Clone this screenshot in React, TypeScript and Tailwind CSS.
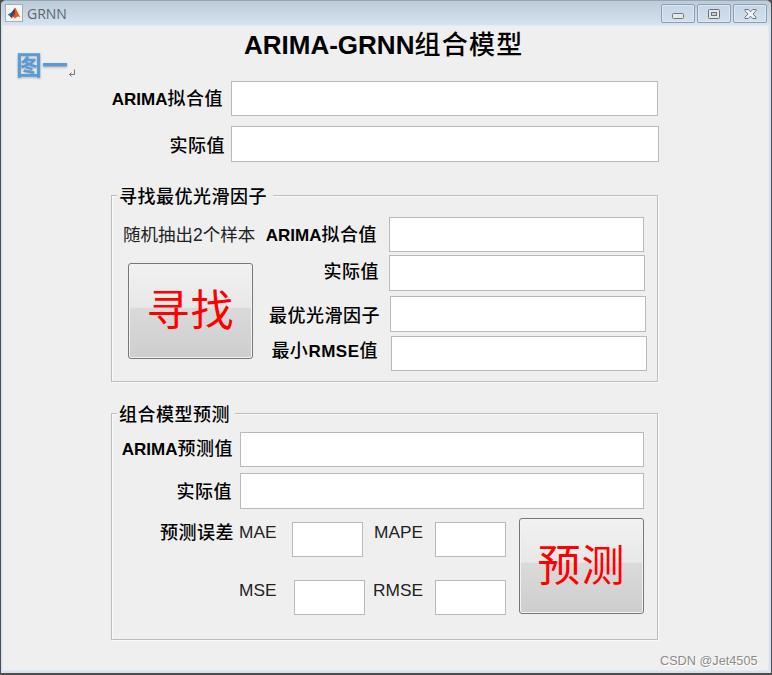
import { ReactNode } from 'react'
import { clsx } from 'clsx'

const latin = "font-['Liberation_Sans','Noto_Sans_CJK_SC',sans-serif]"

// Splits mixed labels so that the CJK part can be set a little larger than the latin part
function Mixed({ text, large }: { text: string; large?: boolean }) {
    const parts = text.split(/([\u4e00-\u9fff]+)/).filter(Boolean)
    return (
        <>
            {parts.map((part, i) => {
                const cjk = /[\u4e00-\u9fff]/.test(part)
                return (
                    <span
                        key={i}
                        className={clsx(
                            cjk && 'font-medium',
                            cjk && (large ? 'text-[26px] tracking-[1.3px]' : 'text-[18px] tracking-[0.5px]')
                        )}
                    >
                        {part}
                    </span>
                )
            })}
        </>
    )
}

function Label({ text, className }: { text: string; className?: string }) {
    return (
        <label className={clsx('shrink-0 text-right font-bold text-[17px] leading-[20px] whitespace-nowrap text-black', className)}>
            <Mixed text={text} />
        </label>
    )
}

function Field({ className }: { className?: string }) {
    return <input className={clsx('block shrink-0 border border-[#b8b8be] bg-white outline-none', className)} />
}

function PushButton({ children }: { children: ReactNode }) {
    return (
        <button className="block h-[96px] w-[125px] shrink-0 rounded-[3px] border border-[#777777] bg-[linear-gradient(#f1f1f1_0%,#e8e8e8_46%,#dadada_47%,#cecece_100%)] text-[43px] leading-none tracking-[1px] whitespace-nowrap text-[#ff0000] shadow-[inset_0_0_0_1px_#f3f3f3]">
            {children}
        </button>
    )
}

function Panel({ title, legendClass, className, children }: { title: string; legendClass: string; className?: string; children: ReactNode }) {
    return (
        <section className={clsx('ml-[108px] w-[547px] border border-[#bdbdbd] shadow-[inset_1px_1px_0_#fafafa,1px_1px_0_#fafafa]', className)}>
            <h2 className={clsx('-mt-[9px] ml-[5px] h-[20px] bg-[#efefef] pl-[2px] text-[18px] leading-[21px] font-medium tracking-[0.5px] whitespace-nowrap', legendClass)}>
                <Mixed text={title} />
            </h2>
            {children}
        </section>
    )
}

function WindowButton({ children }: { children: ReactNode }) {
    return (
        <button className="flex h-[19px] w-[34px] items-center justify-center rounded-[2px] border border-[#8d9db8] bg-gradient-to-b from-[#c6d6e6] to-[#d3e0ee] shadow-[inset_0_0_0_1px_#dce7f1]">
            {children}
        </button>
    )
}

function MatlabIcon() {
    return (
        <svg width="18" height="18" viewBox="0 0 18 18">
            <rect x="0.5" y="0.5" width="17" height="17" fill="#f5f5f5" stroke="#a9adb2" />
            <path d="M2.5 10.5 6.5 8.5 10 4 8.5 11 6 13Z" fill="#3973a8" />
            <path d="M6.5 8.5 10 4 9.5 10 6.5 14.5 5 12Z" fill="#294b78" />
            <path d="M10 3.5C11.5 5 13.5 11 15.5 13 13.5 12 12 12 10 14.5 9 13 8 12 6.5 14 8.5 11.5 9 7 10 3.5Z" fill="#dc5b20" />
            <path d="M9.6 4.5C10.4 8 10 11 8.2 12.5 8.4 10 8.8 7 9.6 4.5Z" fill="#8e2219" />
        </svg>
    )
}

function TitleBar() {
    return (
        <header className="flex h-[25px] shrink-0 items-start bg-gradient-to-b from-[#bccbd9] to-[#d7e4f1] pr-[4px] pl-[4px]">
            <div className="mt-[3px]"><MatlabIcon /></div>
            <span className="mt-[3px] ml-[4px] font-['Open_Sans','Noto_Sans',sans-serif] text-[14px] leading-[19px] text-[#5c6670]">GRNN</span>
            <div className="mt-[3px] ml-auto flex gap-[2px]">
                <WindowButton>
                    <svg width="12" height="6" viewBox="0 0 12 6" className="mt-1">
                        <rect x="0.5" y="0.5" width="11" height="5" rx="1" fill="#e6e6e6" stroke="#737681" />
                    </svg>
                </WindowButton>
                <WindowButton>
                    <svg width="12" height="10" viewBox="0 0 12 10">
                        <rect x="0.5" y="0.5" width="11" height="9" rx="1" fill="#e6e6e6" stroke="#6b6f7b" />
                        <rect x="3.5" y="3.5" width="5" height="3" fill="#c5d3e2" stroke="#6b6f7b" />
                    </svg>
                </WindowButton>
                <WindowButton>
                    <svg width="13" height="10" viewBox="0 0 13 10">
                        <path d="M1 .5h3.2L6.5 2.8 8.8.5H12v1.3L9 5l3 3.2v1.3H8.8L6.5 7.2 4.2 9.5H1V8.2L4 5 1 1.8Z" fill="#f4f4f4" stroke="#6b6f7b" />
                    </svg>
                </WindowButton>
            </div>
        </header>
    )
}

export default function App() {
    return (
        <div className={clsx('h-[675px] w-[772px] overflow-hidden bg-[#4d4d50]', latin)}>
            <div className="relative ml-px flex h-[673px] w-[770px] flex-col overflow-hidden rounded-t-[5px] border-t border-[#9aa4ae] bg-[#d6e2ef]">
                <TitleBar />
                <main className="mr-[3px] ml-[2px] h-[644px] bg-[#efefef] shadow-[0_0_0_1px_#e3eaf2]">
                    <h1 className="ml-[241px] h-[36px] pt-[4px] text-[26px] leading-[30px] font-bold whitespace-nowrap text-black">
                        <Mixed text="ARIMA-GRNN组合模型" large />
                    </h1>

                    <div className="mt-[19px] flex">
                        <Label text="ARIMA拟合值" className="mt-[8px] mr-[8px] w-[220px]" />
                        <Field className="h-[35px] w-[427px]" />
                    </div>
                    <div className="mt-[10px] flex">
                        <Label text="实际值" className="mt-[10px] mr-[6px] w-[222px]" />
                        <Field className="h-[36px] w-[428px]" />
                    </div>

                    <Panel title="寻找最优光滑因子" legendClass="w-[156px]" className="mt-[33px] h-[187px]">
                        <div className="mt-[10px] flex">
                            <div className="ml-[11px] w-[135px]">
                                <p className="mt-[8px] text-[17.5px] leading-[20px] whitespace-nowrap text-[#222222]">随机抽出2个样本</p>
                                <div className="mt-[18px] ml-[5px]"><PushButton>寻找</PushButton></div>
                            </div>
                            <div className="ml-[1px]">
                                <div className="flex">
                                    <Label text="ARIMA拟合值" className="mt-[8px] mr-[12px] w-[118px]" />
                                    <Field className="h-[35px] w-[255px]" />
                                </div>
                                <div className="mt-[3px] flex">
                                    <Label text="实际值" className="mt-[7px] mr-[10px] w-[120px]" />
                                    <Field className="h-[36px] w-[256px]" />
                                </div>
                                <div className="mt-[5px] flex">
                                    <Label text="最优光滑因子" className="mt-[10px] mr-[10px] w-[121px]" />
                                    <Field className="h-[36px] w-[256px]" />
                                </div>
                                <div className="mt-[4px] flex">
                                    <Label text="最小RMSE值" className="mt-[5px] mr-[13px] w-[119px] tracking-[0.5px]" />
                                    <Field className="h-[35px] w-[256px]" />
                                </div>
                            </div>
                        </div>
                    </Panel>

                    <Panel title="组合模型预测" legendClass="w-[118px]" className="mt-[31px] h-[227px]">
                        <div className="mt-[7px] flex">
                            <Label text="ARIMA预测值" className="mt-[7px] mr-[7px] w-[121px]" />
                            <Field className="h-[35px] w-[404px]" />
                        </div>
                        <div className="mt-[6px] flex">
                            <Label text="实际值" className="mt-[9px] mr-[8px] w-[120px]" />
                            <Field className="h-[36px] w-[404px]" />
                        </div>
                        <div className="mt-[9px] flex">
                            <Label text="预测误差" className="mt-[5px] w-[122px]" />
                            <div className="w-[285px] text-[17.3px] leading-[20px] text-[#222222]">
                                <div className="mt-[4px] flex">
                                    <span className="ml-[5px] w-[53px]">MAE</span>
                                    <Field className="h-[35px] w-[71px]" />
                                    <span className="ml-[11px] w-[61px]">MAPE</span>
                                    <Field className="h-[35px] w-[71px]" />
                                </div>
                                <div className="mt-[23px] flex">
                                    <span className="ml-[5px] w-[55px]">MSE</span>
                                    <Field className="h-[35px] w-[71px]" />
                                    <span className="ml-[8px] w-[62px]">RMSE</span>
                                    <Field className="h-[35px] w-[71px]" />
                                </div>
                            </div>
                            <PushButton>预测</PushButton>
                        </div>
                    </Panel>
                </main>

                {/* Figure caption and watermark */}
                <div className="absolute top-[48px] left-[15px] flex items-end font-bold text-[#5b9bd5]">
                    <span className="text-[26px] leading-[34px] drop-shadow-[0_1px_1px_rgba(0,0,0,0.25)]">图一</span>
                    <svg width="8" height="9" viewBox="0 0 8 9" className="mb-[5px]" fill="none" stroke="#777777">
                        <path d="M6.5 0.5v5h-5M3.5 3.5l-2 2 2 2" />
                    </svg>
                </div>
                <span className="absolute top-[651px] left-[659px] text-[12.7px] leading-[18px] whitespace-nowrap text-[#8b8b8b] [text-shadow:1px_1px_0_#ffffff]">CSDN @Jet4505</span>
            </div>
        </div>
    )
}
